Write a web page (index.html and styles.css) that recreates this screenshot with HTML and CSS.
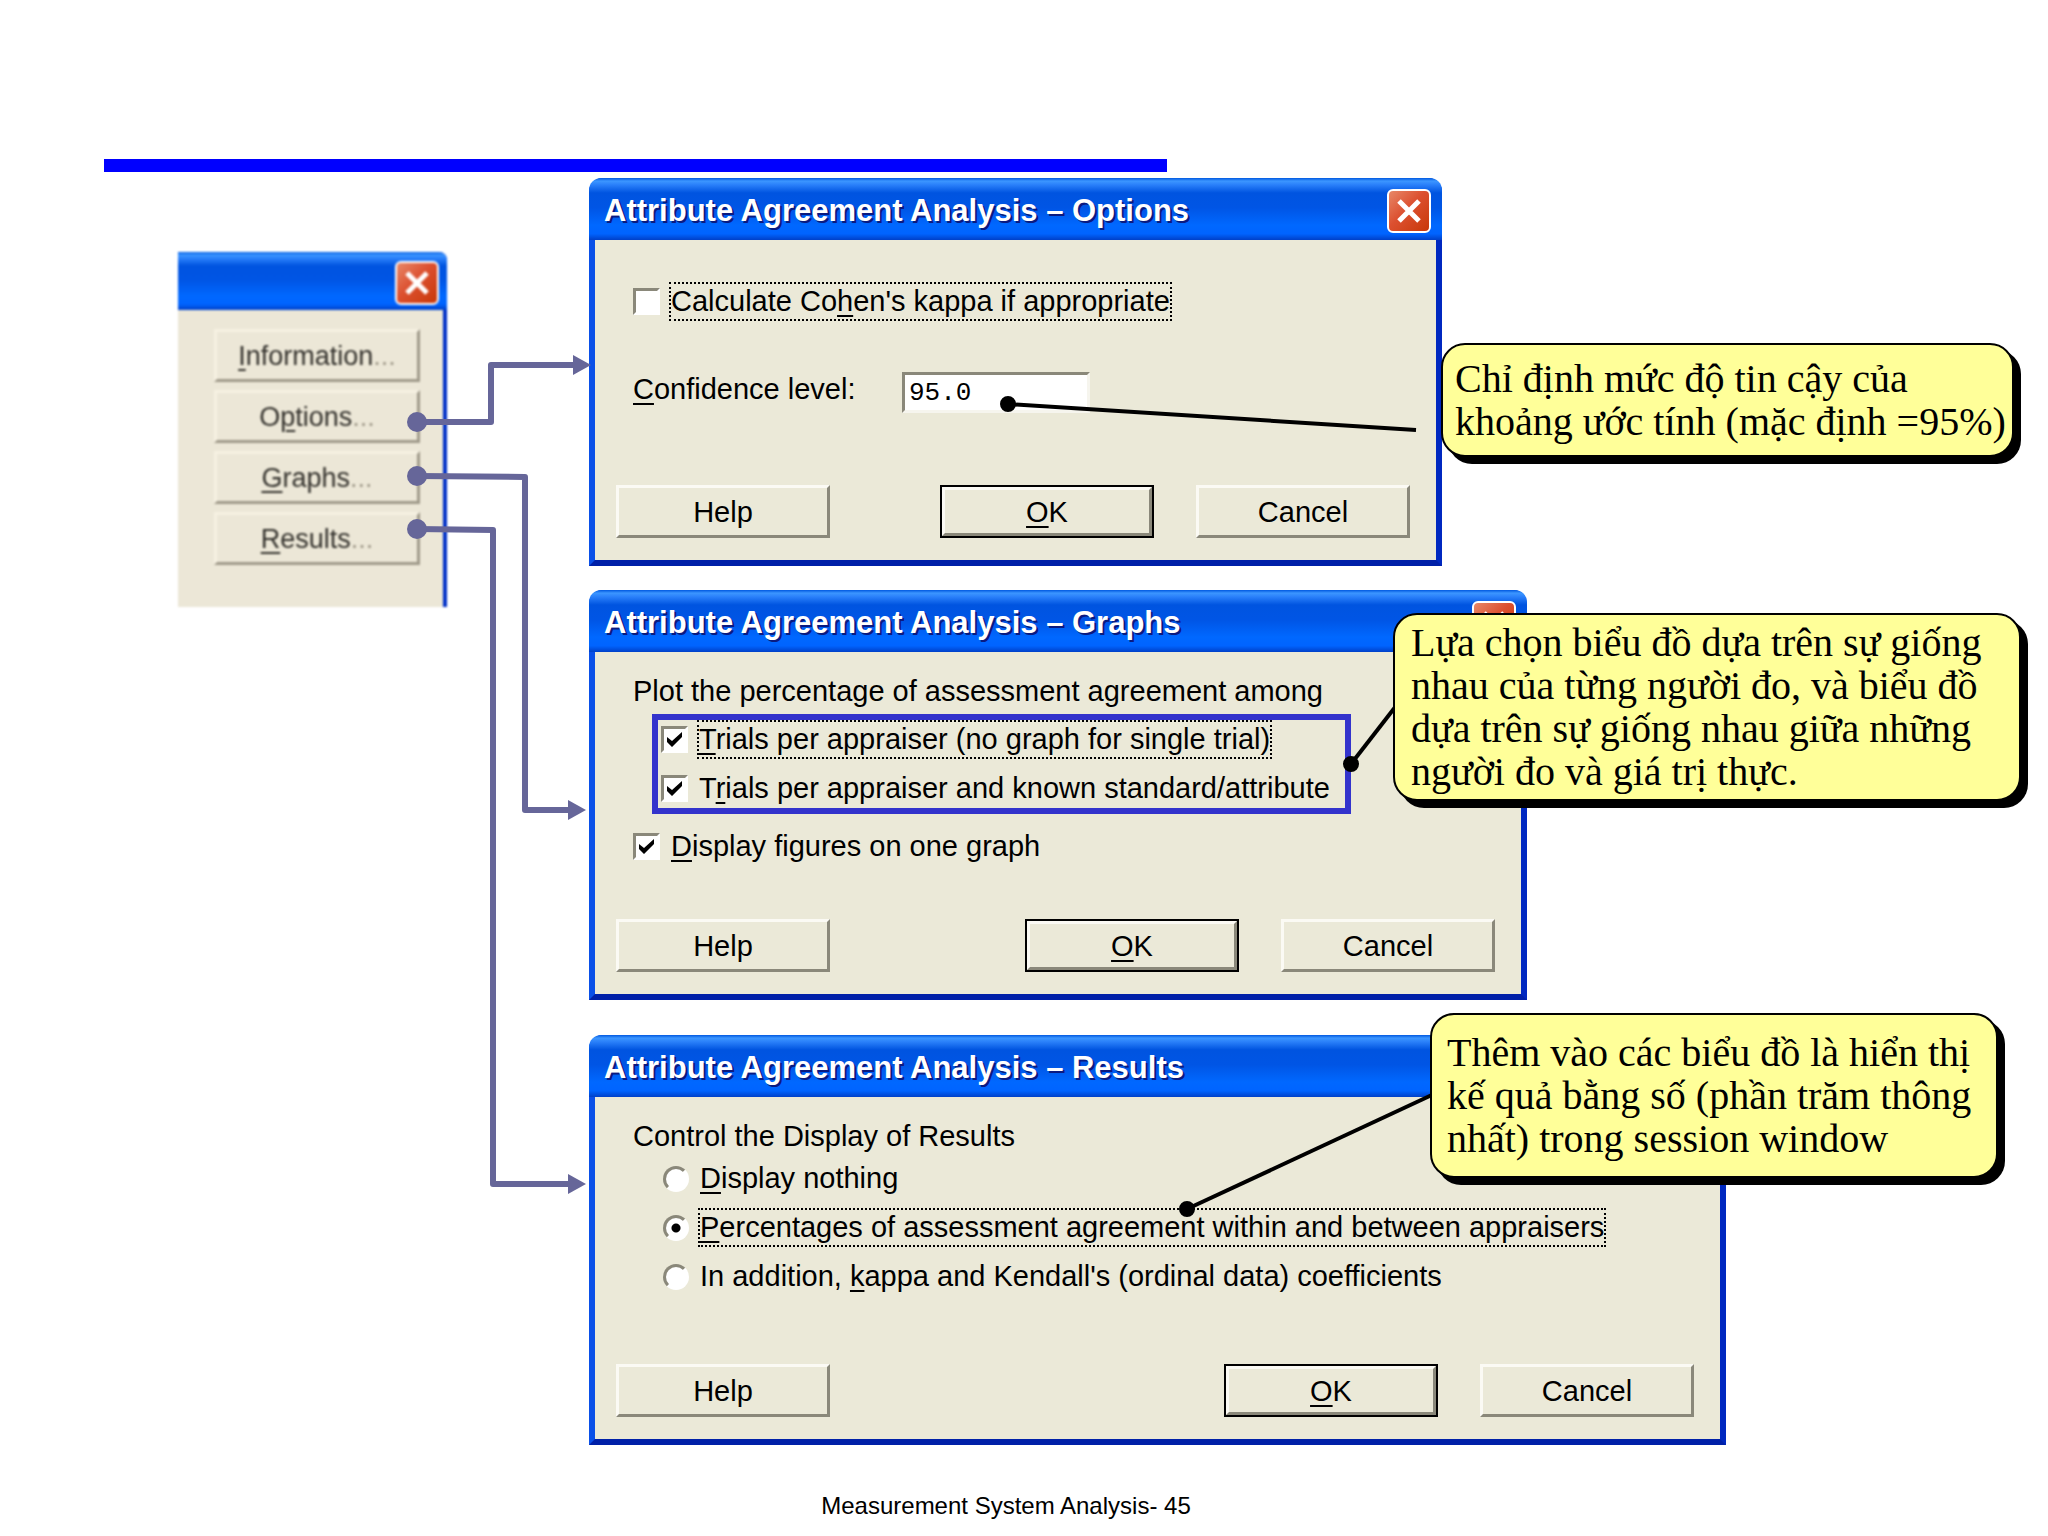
FILE: index.html
```html
<!DOCTYPE html>
<html lang="vi">
<head>
  <meta charset="UTF-8">
  <title>Measurement System Analysis</title>
  <meta name="viewport" content="width=device-width, initial-scale=1.0">
  <link rel="stylesheet" href="styles.css">
</head>
<body>

<main class="slide">
  <hr class="rule">

  <!-- right part of the main dialog -->
  <section class="window window-main">
    <header class="titlebar">
      <button class="close" type="button" aria-label="Close">
        <svg viewBox="0 0 20 20"><path d="M5 5L15 15M15 5L5 15"/></svg>
      </button>
    </header>
    <div class="menu">
      <button class="btn" type="button"><u>I</u>nformation<span class="dots">...</span></button>
      <button class="btn" type="button">O<u>p</u>tions<span class="dots">...</span></button>
      <button class="btn" type="button"><u>G</u>raphs<span class="dots">...</span></button>
      <button class="btn" type="button"><u>R</u>esults<span class="dots">...</span></button>
    </div>
  </section>

  <section class="window window-options">
    <header class="titlebar">
      <h2>Attribute Agreement Analysis – Options</h2>
      <button class="close" type="button" aria-label="Close">
        <svg viewBox="0 0 20 20"><path d="M5 5L15 15M15 5L5 15"/></svg>
      </button>
    </header>
    <form class="body">
      <div class="option">
        <input type="checkbox" id="kappa">
        <label class="focused" for="kappa">Calculate Co<u>h</u>en's kappa if appropriate</label>
      </div>
      <div class="field">
        <label for="level"><u>C</u>onfidence level:</label>
        <input type="text" id="level" value="95.0">
      </div>
      <div class="actions">
        <button class="btn" type="button">Help</button>
        <button class="btn btn-default" type="button"><u>O</u>K</button>
        <button class="btn" type="button">Cancel</button>
      </div>
    </form>
  </section>

  <section class="window window-graphs">
    <header class="titlebar">
      <h2>Attribute Agreement Analysis – Graphs</h2>
      <button class="close" type="button" aria-label="Close">
        <svg viewBox="0 0 20 20"><path d="M5 5L15 15M15 5L5 15"/></svg>
      </button>
    </header>
    <form class="body body-list">
      <p>Plot the percentage of assessment agreement among</p>
      <div class="options highlight">
        <div class="option">
          <input type="checkbox" id="trials" checked>
          <label class="focused" for="trials"><u>T</u>rials per appraiser (no graph for single trial)</label>
        </div>
        <div class="option">
          <input type="checkbox" id="standard" checked>
          <label for="standard">T<u>r</u>ials per appraiser and known standard/attribute</label>
        </div>
      </div>
      <div class="option">
        <input type="checkbox" id="figures" checked>
        <label for="figures"><u>D</u>isplay figures on one graph</label>
      </div>
      <div class="actions">
        <button class="btn" type="button">Help</button>
        <button class="btn btn-default" type="button"><u>O</u>K</button>
        <button class="btn" type="button">Cancel</button>
      </div>
    </form>
  </section>

  <section class="window window-results">
    <header class="titlebar">
      <h2>Attribute Agreement Analysis – Results</h2>
    </header>
    <form class="body body-list">
      <p>Control the Display of Results</p>
      <div class="options radios">
        <div class="option">
          <input type="radio" name="display" id="nothing">
          <label for="nothing"><u>D</u>isplay nothing</label>
        </div>
        <div class="option">
          <input type="radio" name="display" id="percentages" checked>
          <label class="focused" for="percentages"><u>P</u>ercentages of assessment agreement within and between appraisers</label>
        </div>
        <div class="option">
          <input type="radio" name="display" id="kendall">
          <label for="kendall">In addition, <u>k</u>appa and Kendall's (ordinal data) coefficients</label>
        </div>
      </div>
      <div class="actions">
        <button class="btn" type="button">Help</button>
        <button class="btn btn-default" type="button"><u>O</u>K</button>
        <button class="btn" type="button">Cancel</button>
      </div>
    </form>
  </section>

  <!-- connectors -->
  <svg class="lines" aria-hidden="true">
    <g class="arrow">
      <path d="M417 422H491V365H575"/>
      <path d="M417 476L525 477V810H570"/>
      <path d="M417 529L493 530V1184H570"/>
    </g>
    <g class="arrow-head">
      <path d="M573 355L591 365L573 375Z"/>
      <path d="M568 800L586 810L568 820Z"/>
      <path d="M568 1174L586 1184L568 1194Z"/>
      <circle cx="417" cy="422" r="10"/>
      <circle cx="417" cy="476" r="10"/>
      <circle cx="417" cy="529" r="10"/>
    </g>
    <g class="pointer">
      <path d="M1008 404L1416 430"/>
      <path d="M1351 764L1396 706"/>
      <path d="M1187 1209L1434 1094"/>
      <circle cx="1008" cy="404" r="6"/>
      <circle cx="1351" cy="764" r="6"/>
      <circle cx="1187" cy="1209" r="6"/>
    </g>
  </svg>

  <aside class="callout callout-options">Chỉ định mức độ tin cậy của<br>khoảng ước tính (mặc định =95%)</aside>
  <aside class="callout callout-graphs">Lựa chọn biểu đồ dựa trên sự giống<br>nhau của từng người đo, và biểu đồ<br>dựa trên sự giống nhau giữa những<br>người đo và giá trị thực.</aside>
  <aside class="callout callout-results">Thêm vào các biểu đồ là hiển thị<br>kế quả bằng số (phần trăm thông<br>nhất) trong session window</aside>

  <footer>Measurement System Analysis- 45</footer>
</main>

</body>
</html>
```

FILE: styles.css
```css
* { box-sizing: border-box; }
body {
  margin: 0;
  background: #fff;
  color: #000;
  font-family: "Liberation Sans", Arial, sans-serif;
  font-size: 29px;
  line-height: 34px;
}
.slide {
  position: relative;
  min-height: 100vh;
  display: flex;
  flex-direction: column;
}
.rule {
  width: 51.9%;
  height: 13px;
  margin: 159px 0 0 104px;
  border: 0;
  background: #0000ff;
}
u { text-underline-offset: 4px; text-decoration-thickness: 2px; }

/* Windows on the slide */
.window {
  position: absolute;
  display: flex;
  flex-direction: column;
  background: #ebe9d8;
  border: 6px solid;
  border-color: #0050e0 #0028c0 #0020a8 #0a50e8;
  border-top: 0;
  border-radius: 14px 14px 0 0;
}
.window-main { left: 178px; top: 252px; width: 269px; height: 355px; }
.window-options { left: 589px; top: 178px; width: 853px; height: 388px; }
.window-graphs { left: 589px; top: 590px; width: 938px; height: 410px; }
.window-results { left: 589px; top: 1035px; width: 1137px; height: 410px; }

.titlebar {
  display: flex;
  align-items: center;
  justify-content: space-between;
  height: 62px;
  margin: 0 -6px;
  padding: 4px 11px 0 15px;
  border-radius: 12px 12px 0 0;
  background: linear-gradient(#0058e0 0, #3c96ff 5%, #2a80fa 11%, #0054e0 24%, #0055e5 48%, #0068ff 76%, #0064ff 90%, #0040c8 100%);
}
.titlebar h2 {
  margin: 0;
  color: #fff;
  font-size: 31px;
  font-weight: 700;
  line-height: 34px;
  text-shadow: 2px 2px 0 #0a1a80;
}
.close {
  width: 44px;
  height: 44px;
  margin-left: auto;
  padding: 0;
  border: 2px solid #fff;
  border-radius: 6px;
  background: linear-gradient(135deg, #e88868, #dc5030 45%, #c83808);
}
.close svg { display: block; width: 40px; height: 40px; }
.close path { stroke: #fff; stroke-width: 2.5; fill: none; }

.body {
  flex: 1;
  display: flex;
  flex-direction: column;
  align-items: flex-start;
  padding: 42px 26px 22px 21px;
}
.body-list { padding-top: 22px; }
.body p { margin: 0 0 6px 17px; }

/* Check boxes and radio buttons */
.option {
  display: flex;
  align-items: center;
  gap: 9px;
  margin-left: 17px;
}
.option label {
  padding-bottom: 1px;
  border: 2px dotted transparent;
  white-space: nowrap;
}
.option .focused { border-color: #000; }
.option input {
  appearance: none;
  width: 27px;
  height: 27px;
  margin: 0;
  border: 3px solid;
  border-color: #8a887a #fff #fff #8a887a;
  background: #fff;
}
.option input[type="checkbox"]:checked {
  background: #fff url("data:image/svg+xml,%3Csvg xmlns='http://www.w3.org/2000/svg' viewBox='0 0 21 21'%3E%3Cpath d='M3 8L8 12L18 3V8L8 18L3 13Z'/%3E%3C/svg%3E") center no-repeat;
}
.option input[type="radio"] {
  width: 26px;
  height: 26px;
  border-radius: 50%;
}
.option input[type="radio"]:checked {
  background: radial-gradient(circle, #000 4px, #fff 5px);
}
.options {
  display: flex;
  flex-direction: column;
  gap: 10px;
}
.options .option { margin-left: 3px; }
.highlight {
  width: 699px;
  margin: 0 0 13px 36px;
  border: 6px solid #3333cc;
}
.radios { margin-left: 44px; }

.field {
  display: flex;
  margin: 51px 0 0 17px;
}
.field label { width: 269px; }
.field input {
  width: 188px;
  height: 41px;
  padding: 0 4px;
  border: 3px solid;
  border-color: #8a887a #f6f5ee #f6f5ee #8a887a;
  background: #fff;
  color: #000;
  font: 26px "Liberation Mono", monospace;
}

/* Push buttons */
.btn {
  width: 214px;
  height: 53px;
  padding: 0;
  border: 3px solid;
  border-color: #fbfaf4 #8a887a #8a887a #fbfaf4;
  background: #ebe9d8;
  color: #000;
  font: inherit;
}
.btn-default {
  outline: 2px solid #000;
  outline-offset: -2px;
  border-width: 5px;
}
.actions {
  display: flex;
  align-self: stretch;
  gap: 42px;
  margin-top: auto;
}
.actions .btn:first-child { margin-right: auto; }

.window-main {
  border-width: 0 4px 0 0;
  border-color: #0030c8;
  border-radius: 0 8px 0 0;
  background: #ece7d7;
  filter: blur(1px);
}
.window-main .titlebar {
  height: 58px;
  margin: 0 -4px 0 0;
  padding: 4px 8px 0 0;
  border-radius: 0 8px 0 0;
}
.menu {
  display: flex;
  flex-direction: column;
  align-items: flex-end;
  gap: 8px;
  padding: 19px 23px 0 0;
}
.menu .btn {
  width: 206px;
  border-color: #f6f1e2 #a09a8a #a09a8a #f6f1e2;
  background: #ece7d7;
  color: #33312c;
  font-size: 27px;
}
.dots { color: #a09a8a; }

.lines {
  position: absolute;
  inset: 0;
  width: 100%;
  height: 100%;
  pointer-events: none;
}
.arrow { fill: none; stroke: #666699; stroke-width: 6; stroke-linejoin: round; }
.arrow-head { fill: #666699; }
.pointer { stroke: #000; stroke-width: 4; }

/* Notes */
.callout {
  position: absolute;
  display: flex;
  align-items: center;
  border: 2px solid #000;
  border-radius: 24px;
  background: #ffff99;
  box-shadow: 7px 7px 0 #000;
  font-family: "Liberation Serif", "Times New Roman", serif;
  font-size: 40px;
  line-height: 43px;
  white-space: nowrap;
}
.callout-options { left: 1441px; top: 343px; width: 573px; padding: 12px; }
.callout-graphs { left: 1393px; top: 613px; width: 628px; padding: 6px 16px; }
.callout-results { left: 1430px; top: 1013px; width: 568px; padding: 16px 15px; }

footer {
  margin-top: auto;
  padding: 0 36px 13px 0;
  text-align: center;
  font-size: 24px;
}
```
